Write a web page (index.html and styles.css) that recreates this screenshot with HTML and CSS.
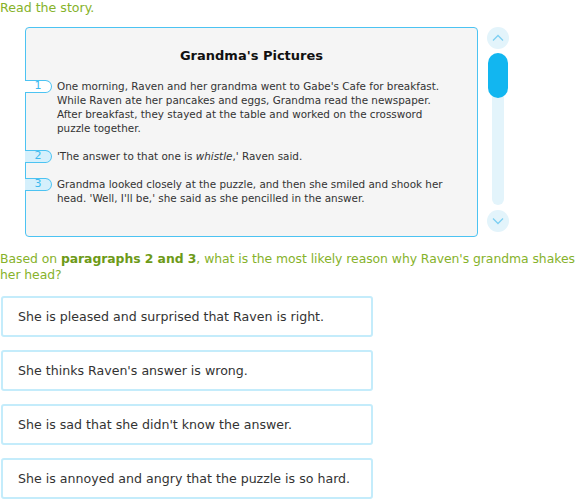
FILE: index.html
```html
<!DOCTYPE html>
<html lang="en">
<head>
<meta charset="utf-8">
<title>Grandma's Pictures</title>
<link rel="stylesheet" href="styles.css">
</head>
<body>
  <p class="prompt">Read the story.</p>

  <div class="reader">
    <div class="story">
      <h2 class="story-title">Grandma's Pictures</h2>
      <div class="para">
        <span class="num">1</span>
        <p>One morning, Raven and her grandma went to Gabe's Cafe for breakfast. While Raven ate her pancakes and eggs, Grandma read the newspaper. After breakfast, they stayed at the table and worked on the crossword puzzle together.</p>
      </div>
      <div class="para">
        <span class="num hl">2</span>
        <p>'The answer to that one is <em>whistle</em>,' Raven said.</p>
      </div>
      <div class="para">
        <span class="num hl">3</span>
        <p>Grandma looked closely at the puzzle, and then she smiled and shook her head. 'Well, I'll be,' she said as she pencilled in the answer.</p>
      </div>
    </div>

    <div class="scroller">
      <button class="scroll-btn" aria-label="Scroll up">
        <svg width="12" height="8" viewBox="0 0 12 8"><path d="M1 6.5 L6 1.5 L11 6.5" fill="none" stroke="#7dcff2" stroke-width="1.3"/></svg>
      </button>
      <div class="track"><div class="thumb"></div></div>
      <button class="scroll-btn" aria-label="Scroll down">
        <svg width="12" height="8" viewBox="0 0 12 8"><path d="M1 1.5 L6 6.5 L11 1.5" fill="none" stroke="#7dcff2" stroke-width="1.3"/></svg>
      </button>
    </div>
  </div>

  <p class="question">Based on <strong>paragraphs 2 and 3</strong>, what is the most likely reason why Raven's grandma shakes her head?</p>

  <div class="choices">
    <div class="choice">She is pleased and surprised that Raven is right.</div>
    <div class="choice">She thinks Raven's answer is wrong.</div>
    <div class="choice">She is sad that she didn't know the answer.</div>
    <div class="choice">She is annoyed and angry that the puzzle is so hard.</div>
  </div>
</body>
</html>
```

FILE: styles.css
```css
* { box-sizing: border-box; }

body {
  margin: 0;
  font-family: "DejaVu Sans", Verdana, sans-serif;
  background: #fff;
  color: #333;
}

.prompt {
  margin: 0;
  font-size: 12.6px;
  line-height: 16px;
  color: #86b22a;
}

.reader {
  display: flex;
  align-items: flex-start;
  margin: 11px 0 0 25px;
}

.story {
  width: 453px;
  height: 210px;
  background: #f5f5f5;
  border: 1px solid #4cc3f2;
  border-radius: 4px;
  padding: 20px 0 0 0;
}

.story-title {
  margin: 0 0 15px;
  text-align: center;
  font-size: 13px;
  line-height: 16px;
  font-weight: bold;
  color: #111;
}

.para {
  display: flex;
  align-items: flex-start;
  margin-bottom: 14px;
}

.para p {
  margin: 0;
  padding-right: 20px;
  font-size: 10.4px;
  line-height: 14px;
  color: #333;
}

.num {
  flex: 0 0 27px;
  height: 13px;
  margin: 1px 5px 0 -1px;
  border: 1.5px solid #4cc3f2;
  border-left: none;
  border-radius: 0 7px 7px 0;
  background: #fff;
  color: #3cb9ee;
  font-size: 11px;
  line-height: 10px;
  text-align: center;
}

.num.hl { background: #d5f0fc; }

.scroller {
  display: flex;
  flex-direction: column;
  align-items: center;
  width: 22px;
  margin: 0 0 0 9px;
}

.scroll-btn {
  width: 22px;
  height: 22px;
  border: none;
  border-radius: 50%;
  background: #e3f4fb;
  padding: 0;
  display: flex;
  align-items: center;
  justify-content: center;
}

.track {
  width: 12px;
  height: 152px;
  margin: 4px 0 5px;
  background: #e3f4fb;
  border-radius: 6px;
  position: relative;
}

.thumb {
  position: absolute;
  left: -4px;
  top: 0;
  width: 20px;
  height: 45px;
  background: #12b6f0;
  border-radius: 10px;
}

.question {
  margin: 14px 0 0;
  font-size: 12.4px;
  letter-spacing: -0.05px;
  line-height: 16px;
  color: #86b22a;
}

.question strong { color: #6d9a17; }

.choices {
  display: flex;
  flex-direction: column;
  gap: 13px;
  margin: 13px 0 0 1px;
}

.choice {
  width: 372px;
  height: 41px;
  padding: 0 0 0 15px;
  border: 2px solid #c4ecfb;
  border-radius: 3px;
  font-size: 12.6px;
  line-height: 37px;
  color: #333;
  background: #fff;
}
```
